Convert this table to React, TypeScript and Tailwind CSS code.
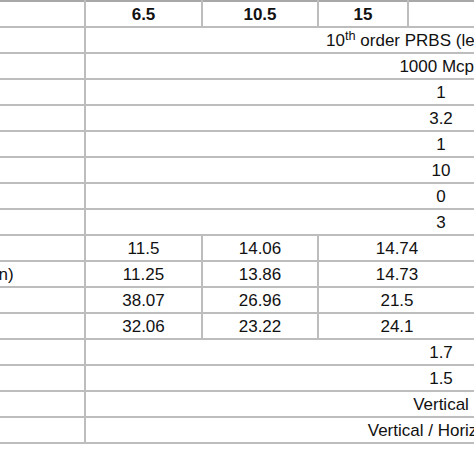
const cell = "h-[26px] leading-[20px] border-b-2 border-r-2 border-[#bdbdbd] text-center align-middle p-0 pt-[2px] whitespace-nowrap overflow-hidden";

const spanRows = [
  <>10<sup>th</sup> order PRBS (length 1023)</>,
  "1000 Mcps",
  "1",
  "3.2",
  "1",
  "10",
  "0",
  "3",
];

const dataRows = [
  ["11.5", "14.06", "14.74"],
  ["11.25", "13.86", "14.73"],
  ["38.07", "26.96", "21.5"],
  ["32.06", "23.22", "24.1"],
];

const tailRows = ["1.7", "1.5", "Vertical", "Vertical / Horizontal"];

export default function App() {
  return (
    <div className="w-[474px] h-[474px] overflow-hidden bg-white text-[#111111] text-[17px] font-['Liberation_Sans',Arial,sans-serif]">
      <table className="table-fixed border-collapse w-[797px] border-t-2 border-[#a8a8a8]">
        <colgroup>
          <col className="w-[85px]" />
          <col className="w-[117px]" />
          <col className="w-[116px]" />
          <col className="w-[90px]" />
          <col className="w-[68px]" />
          <col className="w-[321px]" />
        </colgroup>
        <tbody>
          <tr className="font-bold">
            <td className={cell}></td>
            <td className={cell}>6.5</td>
            <td className={cell}>10.5</td>
            <td className={cell}>15</td>
            <td className={cell} colSpan={2}></td>
          </tr>
          {spanRows.map((v, i) => (
            <tr key={"s" + i}>
              <td className={cell}></td>
              <td className={cell} colSpan={5}>{v}</td>
            </tr>
          ))}
          {dataRows.map((r, i) => (
            <tr key={"d" + i}>
              <td className={cell + " text-left"}>
                {i === 1 && <span className="block -ml-[11px]">on)</span>}
              </td>
              <td className={cell}>{r[0]}</td>
              <td className={cell}>{r[1]}</td>
              <td className={cell} colSpan={2}>{r[2]}</td>
              <td className={cell}></td>
            </tr>
          ))}
          {tailRows.map((v, i) => (
            <tr key={"t" + i}>
              <td className={cell}></td>
              <td className={cell} colSpan={5}>{v}</td>
            </tr>
          ))}
        </tbody>
      </table>
    </div>
  );
}
